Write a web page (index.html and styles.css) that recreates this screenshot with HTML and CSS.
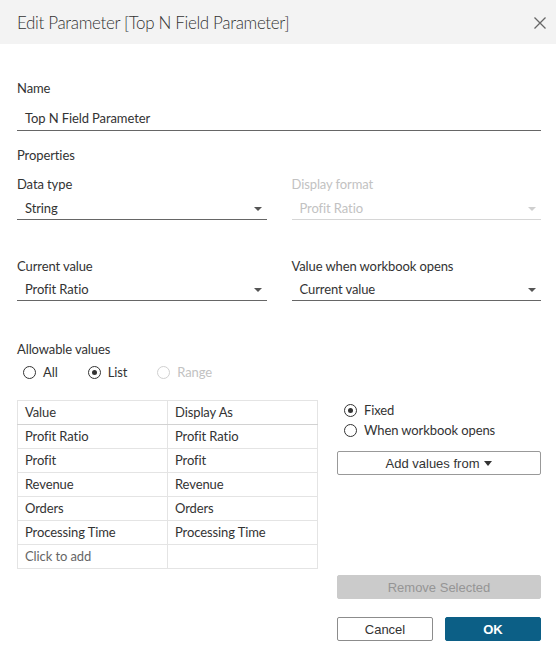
FILE: index.html
```html
<!DOCTYPE html>
<html>
<head>
<meta charset="utf-8">
<link rel="stylesheet" href="styles.css">
</head>
<body>
<div class="dialog">
  <header class="titlebar">
    <span class="title">Edit Parameter [Top N Field Parameter]</span>
    <svg class="close" width="12" height="12" viewBox="0 0 12 12"><path d="M0.5 0.5 L11.5 11.5 M11.5 0.5 L0.5 11.5" stroke="#666" stroke-width="1.3" fill="none"/></svg>
  </header>
  <main class="content">
    <div class="label name-label">Name</div>
    <div class="textinput">Top N Field Parameter</div>
    <div class="label section-label">Properties</div>
    <div class="grid2 row-a">
      <div class="field">
        <div class="label">Data type</div>
        <div class="select select-a">String<span class="arrow"></span></div>
      </div>
      <div class="field disabled">
        <div class="label">Display format</div>
        <div class="select select-a">Profit Ratio<span class="arrow"></span></div>
      </div>
    </div>
    <div class="grid2 row-b">
      <div class="field">
        <div class="label">Current value</div>
        <div class="select select-b">Profit Ratio<span class="arrow"></span></div>
      </div>
      <div class="field">
        <div class="label">Value when workbook opens</div>
        <div class="select select-b">Current value<span class="arrow"></span></div>
      </div>
    </div>
    <div class="label allow-label">Allowable values</div>
    <div class="radios">
      <label class="radio"><span class="dot"></span>All</label>
      <label class="radio checked"><span class="dot"></span>List</label>
      <label class="radio off"><span class="dot"></span>Range</label>
    </div>
    <div class="bottom">
      <table class="values">
        <thead>
          <tr><th>Value</th><th>Display As</th></tr>
        </thead>
        <tbody>
          <tr><td>Profit Ratio</td><td>Profit Ratio</td></tr>
          <tr><td>Profit</td><td>Profit</td></tr>
          <tr><td>Revenue</td><td>Revenue</td></tr>
          <tr><td>Orders</td><td>Orders</td></tr>
          <tr><td>Processing Time</td><td>Processing Time</td></tr>
          <tr><td class="hint">Click to add</td><td></td></tr>
        </tbody>
      </table>
      <div class="side">
        <label class="radio checked side-radio"><span class="dot"></span>Fixed</label>
        <label class="radio side-radio second"><span class="dot"></span>When workbook opens</label>
        <button class="btn add">Add values from <span class="caret"></span></button>
        <button class="btn remove">Remove Selected</button>
        <div class="footer">
          <button class="btn cancel">Cancel</button>
          <button class="btn ok">OK</button>
        </div>
      </div>
    </div>
  </main>
</div>
</body>
</html>
```
FILE: styles.css
```css
html, body {
  margin: 0;
  padding: 0;
  background: #fff;
}
body {
  font-family: Lato, "Open Sans", sans-serif;
  font-size: 13px;
  color: #333;
  letter-spacing: -0.1px;
}
.dialog {
  width: 556px;
  height: 660px;
  background: #fff;
}
.titlebar {
  height: 44px;
  background: #f3f3f3;
  display: flex;
  align-items: center;
  justify-content: space-between;
  padding: 0 10px 0 17px;
  box-sizing: border-box;
}
.title {
  font-size: 17px;
  font-weight: 300;
  color: #333;
  letter-spacing: -0.35px;
}
.close {
  display: block;
  margin-top: 1px;
}
.content {
  padding: 0 15px 0 17px;
}
.label {
  line-height: 16px;
  height: 16px;
  color: #333;
}
.name-label { margin-top: 36px; }
.textinput {
  margin-top: 11px;
  height: 23px;
  line-height: 23px;
  padding-left: 8px;
  border-bottom: 1px solid #666;
}
.section-label { margin-top: 16px; }
.grid2 {
  display: grid;
  grid-template-columns: 1fr 1fr;
  column-gap: 25px;
}
.row-a { margin-top: 13px; }
.row-b { margin-top: 38px; }
.select {
  position: relative;
  height: 22px;
  line-height: 22px;
  padding-left: 8px;
  border-bottom: 1px solid #666;
}
.select-a { margin-top: 5px; }
.select-b { margin-top: 4px; }
.arrow {
  position: absolute;
  right: 5px;
  top: 10px;
  width: 0;
  height: 0;
  border-left: 4px solid transparent;
  border-right: 4px solid transparent;
  border-top: 4px solid #555;
}
.disabled .label,
.disabled .select {
  color: #c2c2c2;
}
.disabled .select { border-bottom-color: #d6d6d6; }
.disabled .arrow { border-top-color: #cfcfcf; }
.allow-label { margin-top: 40px; }
.radios {
  margin-top: 7px;
  padding-left: 6px;
  display: flex;
  gap: 30px;
  height: 16px;
}
.radio {
  display: flex;
  align-items: center;
  gap: 7px;
  line-height: 16px;
  height: 16px;
}
.dot {
  width: 11px;
  height: 11px;
  border: 1px solid #333;
  border-radius: 50%;
  position: relative;
  flex: none;
}
.radio.checked .dot::after {
  content: "";
  position: absolute;
  left: 3px;
  top: 3px;
  width: 5px;
  height: 5px;
  border-radius: 50%;
  background: #333;
}
.radio.off { color: #c2c2c2; }
.radio.off .dot { border-color: #d0d0d0; }
.bottom {
  margin-top: 20px;
  display: flex;
  align-items: flex-start;
}
.values {
  width: 301px;
  border-collapse: collapse;
  table-layout: fixed;
}
.values th, .values td {
  border: 1px solid #e4e4e4;
  height: 23px;
  box-sizing: border-box;
  padding: 0 0 0 7px;
  font-weight: normal;
  text-align: left;
  line-height: 21px;
  color: #333;
  white-space: nowrap;
}
.values tr { height: 24px; }
.values th { border-bottom-color: #d2d2d2; }
.values td.hint { color: #666; }
.side {
  margin-left: 19px;
  width: 204px;
  display: flex;
  flex-direction: column;
}
.side-radio {
  margin-top: 2px;
  padding-left: 7px;
}
.side-radio.second { margin-top: 4px; }
.btn {
  font-family: "Liberation Sans", Arial, sans-serif;
  font-size: 13px;
  letter-spacing: 0;
  height: 24px;
  box-sizing: border-box;
  border-radius: 2px;
  padding: 0;
  margin: 0;
  color: #333;
  background: #fff;
  border: 1px solid #999;
}
.add {
  margin-top: 13px;
  width: 204px;
  display: flex;
  align-items: center;
  justify-content: center;
  gap: 5px;
}
.caret {
  width: 0;
  height: 0;
  border-left: 4px solid transparent;
  border-right: 4px solid transparent;
  border-top: 5px solid #333;
  margin-top: 1px;
}
.remove {
  margin-top: 100px;
  width: 204px;
  background: #cbcbcb;
  border-color: #cbcbcb;
  color: #959595;
}
.footer {
  margin-top: 18px;
  display: flex;
  gap: 12px;
}
.cancel {
  width: 96px;
  border-color: #8c8c8c;
}
.ok {
  width: 96px;
  background: #0c5f86;
  border-color: #0c5f86;
  color: #fff;
  font-weight: bold;
}
```
